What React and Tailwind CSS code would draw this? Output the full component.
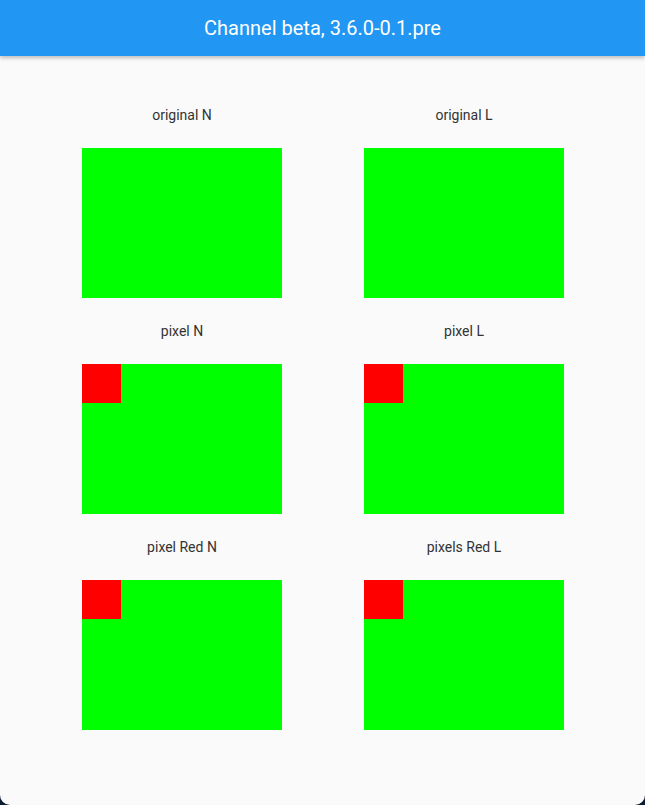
const ITEMS = [
  ['original N', 'original L', false],
  ['pixel N', 'pixel L', true],
  ['pixel Red N', 'pixels Red L', true],
]

function Cell({ label, red }) {
  return (
    <div className="flex flex-col items-center">
      <div className="h-[66px] flex items-center text-[14px] text-[#333333]">{label}</div>
      <div className="w-[200px] h-[150px] bg-[#00ff00]">
        {red && <div className="w-[39px] h-[39px] bg-[#ff0000]" />}
      </div>
    </div>
  )
}

export default function App() {
  return (
    <div className="w-[645px] h-[805px] bg-[#0b1a30]" style={{ fontFamily: 'Roboto, "Noto Sans", sans-serif' }}>
      <div className="w-full h-full bg-[#fafafa] rounded-b-[10px] overflow-hidden flex flex-col">
        <div className="h-[56px] bg-[#2196f3] flex items-center justify-center text-white text-[20px] shadow-[0_2px_4px_rgba(0,0,0,0.25)] relative z-10">
          Channel beta, 3.6.0-0.1.pre
        </div>
        <div className="pt-[26px] flex flex-col">
          {ITEMS.map(([a, b, red], i) => (
            <div key={i} className="flex justify-between pl-[82px] pr-[81px]">
              <Cell label={a} red={red} />
              <Cell label={b} red={red} />
            </div>
          ))}
        </div>
      </div>
    </div>
  )
}
